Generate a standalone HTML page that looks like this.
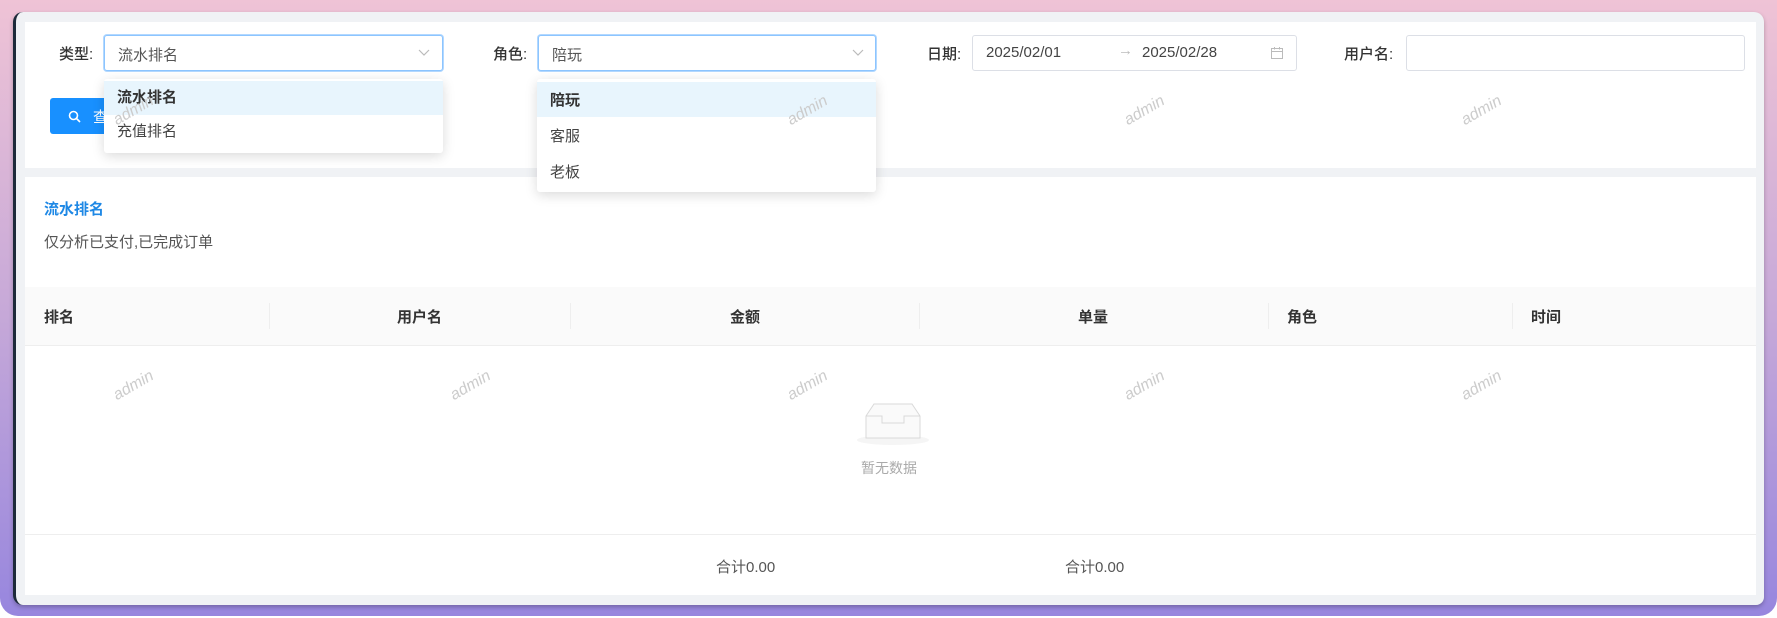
<!DOCTYPE html>
<html><head><meta charset="utf-8">
<style>
*{box-sizing:border-box;margin:0;padding:0}
body{width:1777px;height:618px;overflow:hidden;position:relative;background:#fff;
font-family:"Liberation Sans","Noto Sans CJK SC",sans-serif;font-size:15px;color:#333}
.outer{position:absolute;left:0;top:0;width:1777px;height:616px;border-radius:0 0 18px 18px;
background:linear-gradient(180deg,#efc3d6 0%,#c7a9d8 50%,#9786de 100%)}
.win{position:absolute;left:13px;top:12px;width:1751px;height:593px;background:#f0f2f5;
border-left:3px solid #1d2a3a;border-radius:10px 10px 8px 10px;box-shadow:0 2px 4px rgba(0,0,0,.25)}
.card{position:absolute;background:#fff}
.abs{position:absolute;white-space:nowrap}
.lbl{font-weight:500;color:#333}
.box{position:absolute;height:36px;border:1px solid #dcdfe6;border-radius:3px;background:#fff}
.focus{border-color:#8cc5ff;box-shadow:0 0 0 1px #b3d8ff}
.dd{position:absolute;background:#fff;box-shadow:0 3px 12px rgba(0,0,0,.15);border-radius:3px}
.it{height:34px;line-height:34px;padding-left:13px;color:#444}
.it.on{background:#e8f5fd;font-weight:700;color:#333}
.wm{position:absolute;color:#ccc;font-size:16px;transform:rotate(-30deg);font-style:italic}
.th{position:absolute;top:306px;font-weight:700;color:#333}
.sep{position:absolute;top:303px;width:1px;height:26px;background:#eee}
</style></head><body>
<div class="outer"></div>
<div class="win"></div>
<div class="card" style="left:25px;top:22px;width:1731px;height:146px"></div>
<div class="card" style="left:25px;top:177px;width:1731px;height:418px"></div>

<div class="abs lbl" style="left:59px;top:43px">类型:</div>
<div class="box focus" style="left:104px;top:35px;width:339px">
<span class="abs" style="left:13px;top:8px;color:#555">流水排名</span>
<svg class="abs" style="left:313px;top:12px" width="12" height="10" viewBox="0 0 12 10"><path d="M1 2 L6 7 L11 2" fill="none" stroke="#bbb" stroke-width="1.2"/></svg>
</div>
<div class="abs lbl" style="left:493px;top:43px">角色:</div>
<div class="box focus" style="left:538px;top:35px;width:338px">
<span class="abs" style="left:13px;top:8px;color:#555">陪玩</span>
<svg class="abs" style="left:313px;top:12px" width="12" height="10" viewBox="0 0 12 10"><path d="M1 2 L6 7 L11 2" fill="none" stroke="#bbb" stroke-width="1.2"/></svg>
</div>
<div class="abs lbl" style="left:927px;top:43px">日期:</div>
<div class="box" style="left:972px;top:35px;width:325px">
<span class="abs" style="left:13px;top:8px;color:#444">2025/02/01</span>
<span class="abs" style="left:145px;top:6px;color:#bbb">→</span>
<span class="abs" style="left:169px;top:8px;color:#444">2025/02/28</span>
<svg class="abs" style="left:297px;top:10px" width="14" height="14" viewBox="0 0 14 14"><rect x="1.5" y="2.5" width="11" height="10" fill="none" stroke="#bbb"/><path d="M1.5 5.5H12.5M4.5 1V3.5M9.5 1V3.5" stroke="#bbb"/></svg>
</div>
<div class="abs lbl" style="left:1344px;top:43px">用户名:</div>
<div class="box" style="left:1406px;top:35px;width:339px"></div>

<div class="abs" style="left:50px;top:98px;width:86px;height:36px;background:#1890ff;border-radius:3px;color:#fff">
<svg class="abs" style="left:18px;top:12px" width="13" height="13" viewBox="0 0 13 13"><circle cx="5.5" cy="5.5" r="4" fill="none" stroke="#fff" stroke-width="1.6"/><path d="M8.5 8.5L12 12" stroke="#fff" stroke-width="1.6"/></svg>
<span class="abs" style="left:43px;top:8px">查询</span></div>

<div class="dd" style="left:104px;top:79px;width:339px;height:74px;padding-top:2px">
<div class="it on">流水排名</div><div class="it">充值排名</div></div>
<div class="dd" style="left:537px;top:79px;width:339px;height:113px;padding-top:3px">
<div class="it on" style="height:35px;line-height:37px">陪玩</div><div class="it" style="height:36px;line-height:40px">客服</div><div class="it" style="height:36px;line-height:40px">老板</div></div>

<div class="abs" style="left:44px;top:198px;color:#1e88e5;font-weight:700">流水排名</div>
<div class="abs" style="left:44px;top:231px;color:#555">仅分析已支付,已完成订单</div>

<div class="abs" style="left:25px;top:287px;width:1731px;height:59px;background:#fafafa;border-bottom:1px solid #eee"></div>
<div class="th" style="left:44px">排名</div>
<div class="th" style="left:397px">用户名</div>
<div class="th" style="left:730px">金额</div>
<div class="th" style="left:1078px">单量</div>
<div class="th" style="left:1287px">角色</div>
<div class="th" style="left:1531px">时间</div>
<div class="sep" style="left:269px"></div><div class="sep" style="left:570px"></div>
<div class="sep" style="left:919px"></div><div class="sep" style="left:1268px"></div>
<div class="sep" style="left:1512px"></div>

<svg class="abs" style="left:855px;top:400px" width="76" height="46" viewBox="0 0 76 46">
<ellipse cx="38" cy="40" rx="36" ry="5" fill="#f5f5f5"/>
<path d="M11 16 L19 4 H57 L65 16 V38 H11 Z" fill="#fafafa" stroke="#d9d9d9"/>
<path d="M11 16 H27 V23 H49 V16 H65" fill="none" stroke="#d9d9d9"/>
</svg>
<div class="abs" style="left:861px;top:458px;color:#aaa;font-size:14px">暂无数据</div>

<div class="abs" style="left:25px;top:534px;width:1731px;height:1px;background:#eee"></div>
<div class="abs" style="left:716px;top:556px;color:#555">合计0.00</div>
<div class="abs" style="left:1065px;top:556px;color:#555">合计0.00</div>

<div class="wm" style="left:112px;top:102px">admin</div>
<div class="wm" style="left:786px;top:102px">admin</div>
<div class="wm" style="left:1123px;top:102px">admin</div>
<div class="wm" style="left:1460px;top:102px">admin</div>
<div class="wm" style="left:112px;top:377px">admin</div>
<div class="wm" style="left:449px;top:377px">admin</div>
<div class="wm" style="left:786px;top:377px">admin</div>
<div class="wm" style="left:1123px;top:377px">admin</div>
<div class="wm" style="left:1460px;top:377px">admin</div>
</body></html>
